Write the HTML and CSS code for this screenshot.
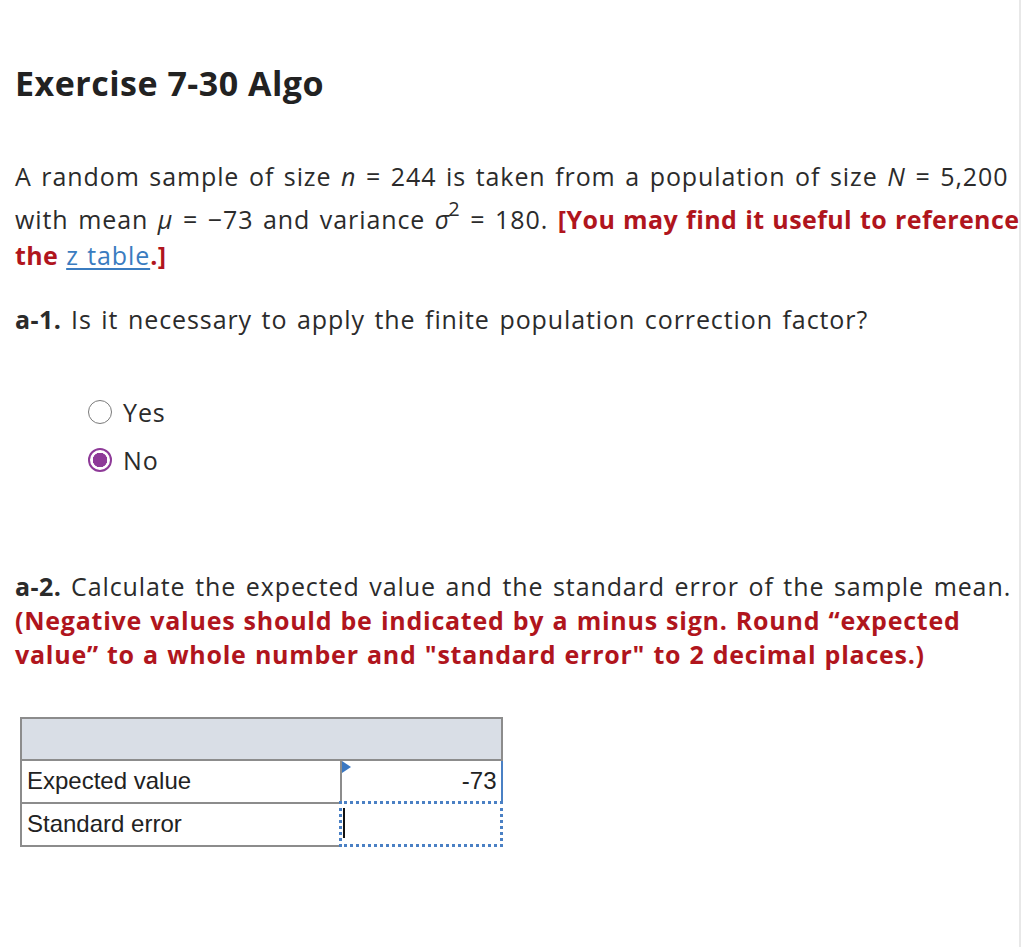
FILE: index.html
```html
<!DOCTYPE html>
<html>
<head>
<meta charset="utf-8">
<link rel="stylesheet" href="styles.css">
</head>
<body>
<div class="page">
  <h1 class="title">Exercise 7-30 Algo</h1>
  <p class="intro">A random sample of size <i>n</i> = 244 is taken from a population of size <i>N</i> = 5,200 with mean <i>μ</i> = −73 and variance <i>σ</i><sup>2</sup> = 180. <b class="hint">[You may find it useful to reference the <a class="link" href="#">z table</a>.]</b></p>
  <p class="question"><b>a-1.</b> Is it necessary to apply the finite population correction factor?</p>
  <div class="options">
    <div class="option"><span class="radio"></span><span>Yes</span></div>
    <div class="option"><span class="radio checked"></span><span>No</span></div>
  </div>
  <p class="question q2"><b>a-2.</b> Calculate the expected value and the standard error of the sample mean. <b class="hint">(Negative values should be indicated by a minus sign. Round “expected value” to a whole number and "standard error" to 2 decimal places.)</b></p>
  <table class="grid">
    <tr class="head"><td colspan="2"></td></tr>
    <tr class="row"><td class="label">Expected value</td><td class="cell filled"><span class="flag"></span>-73</td></tr>
    <tr class="row"><td class="label">Standard error</td><td class="cell dotted"><span class="caret"></span></td></tr>
  </table>
</div>
</body>
</html>
```

FILE: styles.css
```css
html, body {
  margin: 0;
  padding: 0;
  background: #fff;
}
.page {
  box-sizing: border-box;
  width: 1021px;
  min-height: 947px;
  padding: 63px 0 0 15px;
  border-right: 2px solid #e8e8e8;
  font-family: "Open Sans", sans-serif;
  color: #2b2b2b;
}
.title {
  margin: 0;
  font-size: 34px;
  line-height: 40px;
  font-weight: 700;
  letter-spacing: 0.5px;
  color: #222;
}
.intro,
.question {
  font-size: 25px;
  letter-spacing: 0.9px;
  word-spacing: 2.25px;
}
.intro {
  margin: 55px -10px 0 0;
  line-height: 36px;
}
.intro sup {
  font-size: 20px;
  line-height: 30px;
  vertical-align: 13px;
  margin-left: -2px;
}
.hint {
  color: #b0151d;
  font-weight: 700;
  letter-spacing: 0.4px;
  word-spacing: 1px;
}
.question .hint {
  letter-spacing: 0.75px;
}
.question b {
  font-weight: 700;
  letter-spacing: 0.45px;
}
.link {
  color: #3a7cc0;
  font-weight: 400;
  letter-spacing: 0.9px;
  text-decoration: underline;
  text-underline-offset: 3px;
}
.question {
  margin: 29px -10px 0 0;
  line-height: 34px;
}
.options {
  margin: 64px 0 0 73px;
  display: flex;
  flex-direction: column;
  gap: 24px;
}
.option {
  display: flex;
  align-items: center;
  gap: 11px;
  font-size: 25px;
  letter-spacing: 0.9px;
  line-height: 24px;
}
.radio {
  width: 24px;
  height: 24px;
  box-sizing: border-box;
  border: 1.5px solid #7a7a7a;
  border-radius: 50%;
  flex: none;
}
.radio.checked {
  border: 2px solid #8e3a98;
  background: radial-gradient(circle, #8e3a98 0 7px, #fff 7.5px);
}
.question.q2 {
  margin-top: 97px;
}
.grid {
  margin: 46px 0 0 5px;
  border-collapse: collapse;
  font-family: "Liberation Sans", Arial, sans-serif;
  font-size: 24px;
  color: #222;
}
.grid td {
  border: 2px solid #8c8c8c;
  padding: 0;
}
.grid .head td {
  height: 40px;
  background: #d9dee6;
}
.grid .row td {
  height: 40px;
}
.grid td.label {
  width: 312px;
  padding-left: 5px;
}
.grid td.cell {
  width: 154px;
  position: relative;
  text-align: right;
  padding-right: 4px;
}
.grid td.filled {
  border: 2px solid #4a80c4;
}
.grid td.dotted {
  border: 3px dotted #4a80c4;
}
.flag {
  position: absolute;
  left: 0;
  top: 0;
  width: 0;
  height: 0;
  border-top: 6px solid transparent;
  border-bottom: 6px solid transparent;
  border-left: 9px solid #3b78c2;
}
.caret {
  position: absolute;
  left: 1px;
  top: 4px;
  width: 2px;
  height: 30px;
  background: #111;
}
```
